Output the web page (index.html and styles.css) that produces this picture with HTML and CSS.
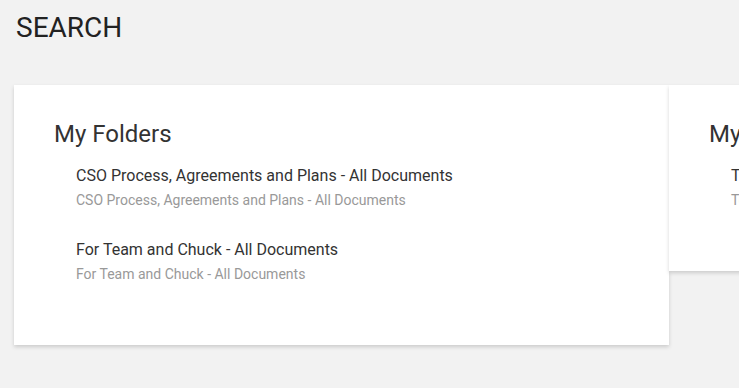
FILE: index.html
```html
<!DOCTYPE html>
<html>
<head>
<meta charset="utf-8">
<link rel="stylesheet" href="styles.css">
</head>
<body>
<div class="page">
  <h1 class="page-title">SEARCH</h1>
  <div class="cards">
    <section class="card">
      <h2 class="card-title">My Folders</h2>
      <ul class="items">
        <li class="item">
          <div class="item-name">CSO Process, Agreements and Plans - All Documents</div>
          <div class="item-sub">CSO Process, Agreements and Plans - All Documents</div>
        </li>
        <li class="item">
          <div class="item-name">For Team and Chuck - All Documents</div>
          <div class="item-sub">For Team and Chuck - All Documents</div>
        </li>
      </ul>
    </section>
    <section class="card">
      <h2 class="card-title">My Teams</h2>
      <ul class="items">
        <li class="item">
          <div class="item-name">Team and Chuck</div>
          <div class="item-sub">Team and Chuck</div>
        </li>
      </ul>
    </section>
  </div>
</div>
</body>
</html>
```

FILE: styles.css
```css
html, body {
  margin: 0;
  padding: 0;
  background: #f2f2f2;
  overflow: hidden;
  width: 739px;
  height: 388px;
}
body {
  font-family: Roboto, "Liberation Sans", sans-serif;
  color: #333;
}
.page {
  padding: 0 0 0 14px;
}
.page-title {
  margin: 0;
  padding: 11px 0 0 2px;
  font-size: 28px;
  line-height: 34px;
  font-weight: 400;
  color: #222;
}
.cards {
  display: flex;
  align-items: flex-start;
  margin-top: 40px;
  width: 2000px;
}
.card {
  flex: 0 0 655px;
  background: #fff;
  box-shadow: 0 2px 4px rgba(0,0,0,0.16);
  padding: 35px 40px 62px;
  box-sizing: border-box;
}
.card-title {
  margin: 0;
  font-size: 24px;
  line-height: 28px;
  font-weight: 400;
  color: #333;
}
.items {
  list-style: none;
  margin: 18px 0 0;
  padding: 0 0 0 22px;
}
.item {
  height: 74px;
}
.item:last-child {
  height: auto;
}
.item-name {
  font-size: 16px;
  line-height: 20px;
  color: #333;
}
.item-sub {
  margin-top: 5px;
  font-size: 14px;
  line-height: 18px;
  color: #999;
}
```
